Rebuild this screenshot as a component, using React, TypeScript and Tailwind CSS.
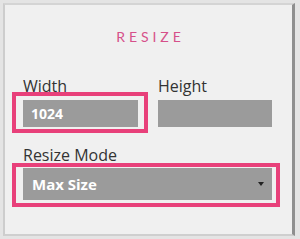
import React from "react";

export default function App() {
  return (
    <div className="w-[300px] h-[239px] bg-[#e4e4e4] pl-[3px] pt-[3px] pr-[5px] pb-[3px] font-['Open_Sans',sans-serif]">
      <div className="w-full h-full bg-[#f0f0f0] border-l-2 border-t-2 border-b-2 border-r-[3px] border-l-[#cdcdcd] border-t-[#d4d4d4] border-b-[#cfcfcf] border-r-[#8f8f8f] flex flex-col">
        <div className="mt-[25px] text-center text-[14px] leading-[14px] tracking-[0.28em] pl-[4px] text-[#d6508a] font-['Lato',sans-serif]">
          RESIZE
        </div>
        <div className="mt-[37px] flex pl-[7px] gap-[10px]">
          <div className="w-[136px] flex flex-col">
            <div className="pl-[11px] h-[11px] text-[16px] leading-[11px] text-[#333]">Width</div>
            <div className="border-4 border-[#e8407a] pl-[7px] pr-[6px] pt-[4px] pb-[2px]">
              <div className="h-[27px] bg-[#9b9b9b] flex items-center pl-[8px] text-[14px] font-bold text-white">
                1024
              </div>
            </div>
          </div>
          <div className="w-[114px] flex flex-col">
            <div className="h-[11px] text-[16px] leading-[11px] text-[#333]">Height</div>
            <div className="mt-[8px] h-[27px] bg-[#9b9b9b]" />
          </div>
        </div>
        <div className="mt-[17px] pl-[18px] h-[11px] text-[16px] leading-[11px] text-[#333]">Resize Mode</div>
        <div className="ml-[7px] mt-[2px] w-[268px] border-4 border-[#e8407a] pl-[7px] pr-[4px] pt-[1px] pb-[3px]">
          <div className="h-[32px] bg-[#9b9b9b] flex items-center justify-between pl-[9px] pr-[8px] text-[15px] font-bold text-white">
            <span>Max Size</span>
            <svg width="6" height="4" viewBox="0 0 6 4">
              <path d="M0 0 L6 0 L3 4 Z" fill="#222" />
            </svg>
          </div>
        </div>
      </div>
    </div>
  );
}
